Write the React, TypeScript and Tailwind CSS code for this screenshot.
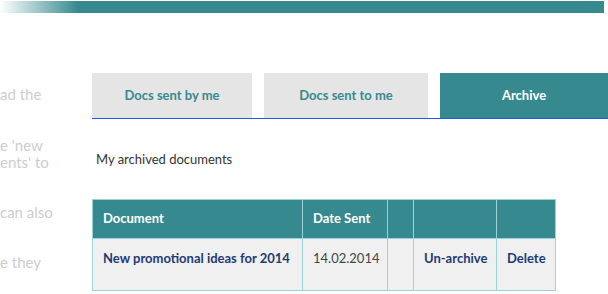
export default function App() {
  const side = [
    { text: "ad the", mt: "mt-[73px]" },
    { text: "e 'new", mt: "mt-[34px]" },
    { text: "ents' to", mt: "mt-0" },
    { text: "can also", mt: "mt-[33px]" },
    { text: "e they", mt: "mt-[33px]" },
  ]

  return (
    <div className="w-[608px] h-[294px] overflow-hidden bg-white font-['Lato',sans-serif] text-[13px]">
      <div className="h-px" />
      <div className="h-3 w-[604px] bg-[linear-gradient(to_right,#ffffff_0px,#368a8f_78px)]" />

      <div className="flex">
        {/* faded sidebar text, clipped on the left */}
        <div className="w-[92px] shrink-0 text-[#cdcdcd] text-[15px] leading-[17px]">
          {side.map((s, i) => (
            <div key={i} className={s.mt}>
              {s.text}
            </div>
          ))}
        </div>

        <div className="flex-1 pt-[60px]">
          <div className="flex gap-3 border-b border-[#1d5be6] h-[46px]">
            <div className="w-[160px] bg-[#e5e5e5] flex items-center justify-center font-bold text-[#378a90]">
              Docs sent by me
            </div>
            <div className="w-[164px] bg-[#e5e5e5] flex items-center justify-center font-bold text-[#378a90]">
              Docs sent to me
            </div>
            <div className="flex-1 bg-[#368a8f] flex items-center justify-center font-bold text-white">
              Archive
            </div>
          </div>

          <div className="mt-[31px] ml-1 text-[#333]">My archived documents</div>

          <table className="mt-[29px] border-collapse table-fixed w-[464px]">
            <thead>
              <tr className="bg-[#368a8f] text-white h-[39px]">
                <th className="w-[210px] border border-[#9ad3d8] text-left font-bold pl-[10px]">Document</th>
                <th className="w-[85px] border border-[#9ad3d8] text-left font-bold pl-[10px]">Date Sent</th>
                <th className="w-[26px] border border-[#9ad3d8]"></th>
                <th className="w-[83px] border border-[#9ad3d8]"></th>
                <th className="border border-[#9ad3d8]"></th>
              </tr>
            </thead>
            <tbody>
              <tr className="bg-[#f0f0f0] h-[52px] align-top">
                <td className="border border-[#9ad3d8] pl-[10px] pt-[10px] font-bold text-[#1f3b74]">
                  New promotional ideas for 2014
                </td>
                <td className="border border-[#9ad3d8] pl-[10px] pt-[10px] text-[#444]">14.02.2014</td>
                <td className="border border-[#9ad3d8]"></td>
                <td className="border border-[#9ad3d8] pl-[10px] pt-[10px] font-bold text-[#1f3b74]">Un-archive</td>
                <td className="border border-[#9ad3d8] pl-[10px] pt-[10px] font-bold text-[#1f3b74]">Delete</td>
              </tr>
            </tbody>
          </table>
        </div>
      </div>
    </div>
  )
}
